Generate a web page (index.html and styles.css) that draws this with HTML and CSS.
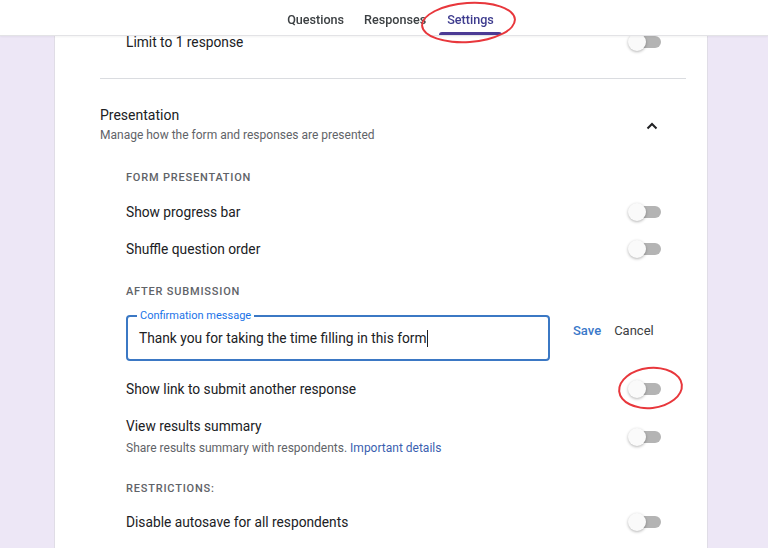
FILE: index.html
```html
<!DOCTYPE html>
<html lang="en">
<head>
    <meta charset="UTF-8">
    <meta name="viewport" content="width=device-width, initial-scale=1.0">
    <title>Form settings</title>
    <link rel="stylesheet" href="styles.css">
</head>
<body>
    <header class="topbar">
        <nav class="tabs">
            <a class="tab">Questions</a>
            <a class="tab">Responses</a>
            <a class="tab active">Settings</a>
        </nav>
        <span class="mark mark-tab"></span>
    </header>

    <main class="page">
        <section class="card">
            <div class="row indent top-row">
                <span class="row-text">Limit to 1 response</span>
                <span class="switch"><span class="track"></span><span class="thumb"></span></span>
            </div>

            <hr class="divider">

            <div class="section-head">
                <div>
                    <h2 class="section-title">Presentation</h2>
                    <p class="section-sub">Manage how the form and responses are presented</p>
                </div>
                <svg class="chevron" width="12" height="8" viewBox="0 0 12 8">
                    <path d="M1.5 6.5 L6 2 L10.5 6.5" fill="none" stroke="#202124" stroke-width="2"/>
                </svg>
            </div>

            <div class="indent">
                <div class="group-label first">Form presentation</div>
                <div class="row">
                    <span class="row-text">Show progress bar</span>
                    <span class="switch"><span class="track"></span><span class="thumb"></span></span>
                </div>
                <div class="row">
                    <span class="row-text">Shuffle question order</span>
                    <span class="switch"><span class="track"></span><span class="thumb"></span></span>
                </div>

                <div class="group-label">After submission</div>
                <div class="confirm">
                    <div class="field">
                        <span class="field-label">Confirmation message</span>
                        <span class="field-value">Thank you for taking the time filling in this form<span class="caret"></span></span>
                    </div>
                    <div class="actions">
                        <button class="btn btn-save">Save</button>
                        <button class="btn">Cancel</button>
                    </div>
                </div>

                <div class="row link-row">
                    <span class="row-text">Show link to submit another response</span>
                    <span class="switch"><span class="track"></span><span class="thumb"></span><span class="mark mark-switch"></span></span>
                </div>
                <div class="row tall">
                    <div>
                        <div class="row-text">View results summary</div>
                        <div class="row-sub">Share results summary with respondents. <a class="link">Important details</a></div>
                    </div>
                    <span class="switch"><span class="track"></span><span class="thumb"></span></span>
                </div>

                <div class="group-label restrict">Restrictions:</div>
                <div class="row">
                    <span class="row-text">Disable autosave for all respondents</span>
                    <span class="switch"><span class="track"></span><span class="thumb"></span></span>
                </div>
            </div>
        </section>
    </main>
</body>
</html>
```

FILE: styles.css
```css
* {
    margin: 0;
    padding: 0;
    box-sizing: border-box;
}

body {
    font-family: Roboto, "Liberation Sans", Arial, sans-serif;
    background: #ede7f6;
    color: #202124;
    height: 548px;
    overflow: hidden;
}

/* top bar */
.topbar {
    position: fixed;
    top: 0;
    left: 0;
    right: 0;
    height: 36px;
    background: #fff;
    border-bottom: 1px solid #e3e3e6;
    box-shadow: 0 1px 2px rgba(0, 0, 0, 0.05);
    z-index: 10;
}

.tabs {
    display: flex;
    justify-content: center;
    gap: 6px;
    height: 100%;
    padding-left: 14px;
}

.tab {
    position: relative;
    display: flex;
    align-items: center;
    padding: 4px 7px 0;
    font-size: 12.6px;
    font-weight: 500;
    color: #3c4043;
    cursor: pointer;
}

.tab.active {
    color: #3d3b8e;
    padding: 4px 8px 0;
}

.tab.active::after {
    content: '';
    position: absolute;
    left: 0;
    right: 0;
    bottom: 0;
    height: 3px;
    border-radius: 3px 3px 0 0;
    background: #4b3a94;
}

/* hand-drawn red marks */
.mark {
    position: absolute;
    border: 2px solid #e8373c;
    border-radius: 50%;
    pointer-events: none;
}

.mark-tab {
    left: 421px;
    top: 2px;
    width: 95px;
    height: 41px;
    transform: rotate(-4deg);
}

.mark-switch {
    left: -10px;
    top: -13px;
    width: 65px;
    height: 42px;
    transform: rotate(-6deg);
}

/* card */
.page {
    height: 100%;
}

.card {
    margin-left: 54px;
    width: 654px;
    height: 100%;
    background: #fff;
    border-left: 1px solid #e0dde6;
    border-right: 1px solid #e0dde6;
    padding: 22px 21px 0 45px;
}

.indent {
    padding-left: 26px;
    padding-right: 25px;
}

.row {
    display: flex;
    align-items: center;
    justify-content: space-between;
    height: 37px;
}

.top-row {
    height: 40px;
}

.row-text {
    font-size: 13.75px;
    color: #202124;
}

.row-sub {
    font-size: 12px;
    color: #5f6368;
    line-height: 22px;
}

.link {
    color: #3b5fb0;
}

.row.tall {
    height: 44px;
    margin-top: 8px;
}

.row.tall .row-text {
    line-height: 22px;
}

.link-row {
    margin-top: 10px;
    height: 36px;
}

.divider {
    border: none;
    border-top: 1px solid #dadce0;
    margin-top: 16px;
}

.section-head {
    display: flex;
    align-items: center;
    justify-content: space-between;
    padding: 26px 28px 0 0;
}

.section-title {
    font-size: 14px;
    font-weight: 400;
    line-height: 20px;
    color: #202124;
}

.section-sub {
    font-size: 12px;
    line-height: 21px;
    color: #5f6368;
}

.chevron {
    display: block;
}

.group-label {
    font-size: 11px;
    font-weight: 500;
    letter-spacing: 0.8px;
    text-transform: uppercase;
    color: #5f6368;
    line-height: 16px;
    margin-top: 17px;
    margin-bottom: 7px;
}

.group-label.first {
    margin-top: 24px;
}

.group-label.restrict {
    margin-top: 22px;
    margin-bottom: 6px;
}

/* confirmation field */
.confirm {
    display: flex;
    align-items: flex-start;
    margin-top: 15px;
}

.field {
    position: relative;
    width: 424px;
    height: 46px;
    border: 2px solid #3b78c4;
    border-radius: 4px;
    display: flex;
    align-items: center;
    padding: 0 0 0 11px;
}

.field-label {
    position: absolute;
    left: 9px;
    top: -8px;
    padding: 0 3px;
    background: #fff;
    font-size: 11px;
    line-height: 14px;
    color: #1a73e8;
}

.field-value {
    font-size: 13.75px;
    color: #202124;
}

.caret {
    display: inline-block;
    width: 1px;
    height: 17px;
    background: #202124;
    vertical-align: -4px;
}

.actions {
    display: flex;
    gap: 13px;
    margin-left: 23px;
    margin-top: 8px;
}

.btn {
    border: none;
    background: none;
    font-family: inherit;
    font-size: 13px;
    font-weight: 400;
    color: #3c4043;
    cursor: pointer;
}

.btn-save {
    font-weight: 500;
    color: #3a78c9;
}

/* switch */
.switch {
    position: relative;
    display: inline-block;
    width: 33px;
    height: 18px;
    flex-shrink: 0;
}

.track {
    position: absolute;
    left: 3px;
    top: 3px;
    width: 30px;
    height: 12px;
    border-radius: 6px;
    background: #b4b4b4;
}

.thumb {
    position: absolute;
    left: 0;
    top: 0;
    width: 18px;
    height: 18px;
    border-radius: 50%;
    background: #fafafa;
    box-shadow: 0 1px 3px rgba(0, 0, 0, 0.3);
}
```
